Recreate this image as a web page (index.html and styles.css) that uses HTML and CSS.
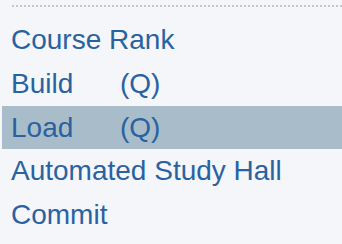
FILE: index.html
```html
<!DOCTYPE html>
<html>
<head>
<meta charset="utf-8">
<link rel="stylesheet" href="styles.css">
</head>
<body>
<div class="menu">
  <div class="sep"></div>
  <ul class="items">
    <li class="item"><span class="label">Course Rank</span></li>
    <li class="item"><span class="label">Build</span><span class="key">(Q)</span></li>
    <li class="item active"><span class="label">Load</span><span class="key">(Q)</span></li>
    <li class="item"><span class="label">Automated Study Hall</span></li>
    <li class="item"><span class="label">Commit</span></li>
  </ul>
</div>
</body>
</html>
```
FILE: styles.css
```css
html, body {
  margin: 0;
  padding: 0;
  background: #f4f6fa;
}
.menu {
  font-family: "Liberation Sans", Arial, sans-serif;
  font-size: 28px;
  color: #2a62a0;
}
.sep {
  margin: 5px 0 0 12px;
  border-top: 2px dotted #c4c7cc;
}
.items {
  list-style: none;
  margin: 11px 0 0 2px;
  padding: 0;
}
.item {
  display: flex;
  height: 43.75px;
  line-height: 43.75px;
  padding-left: 9px;
  white-space: nowrap;
}
.item.active {
  background: #a8bdc9;
}
.label {
  display: inline-block;
  min-width: 109px;
}
.key {
  display: inline-block;
}
```
